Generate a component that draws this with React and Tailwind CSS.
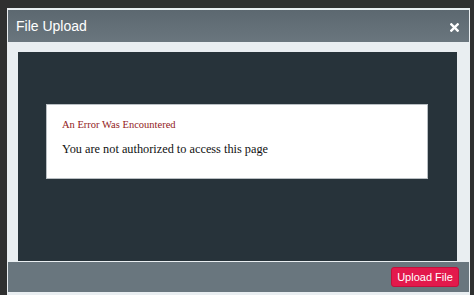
export default function App() {
  return (
    <div className="w-[474px] h-[295px] overflow-hidden bg-[#2f3030] pt-[8px] pl-[7px] pr-[4px]">
      <div className="h-[287px] bg-[#e9eef1] pt-[2px] px-[1px] flex flex-col">
        <div className="h-[32px] shrink-0 bg-gradient-to-b from-[#5c6870] to-[#6a767e] flex items-center justify-between pl-[8px] pr-[10px]">
          <span className="text-white text-[14px] leading-none" style={{ fontFamily: "'Liberation Sans', Arial, sans-serif" }}>File Upload</span>
          <svg width="9" height="9" viewBox="0 0 10 10" className="mt-[3px]">
            <path d="M1.5 1.5 L8.5 8.5 M8.5 1.5 L1.5 8.5" stroke="#ffffff" strokeWidth="2.6" strokeLinecap="square" />
          </svg>
        </div>
        <div className="flex-1 pt-[10px] pl-[10px] pr-[12px] pb-[1px] flex">
          <div className="flex-1 bg-[#27333a] pt-[52px] pl-[28px] pr-[29px]">
            <div className="h-[75px] bg-white border border-[#b9bfc3] pl-[15px] pt-[14px]" style={{ fontFamily: "'Liberation Serif', 'Times New Roman', serif" }}>
              <div className="text-[#921a1a] text-[10.5px] leading-[12px]">An Error Was Encountered</div>
              <div className="text-[#111111] text-[12.3px] leading-[15px] mt-[11px]">You are not authorized to access this page</div>
            </div>
          </div>
        </div>
        <div className="h-[30px] shrink-0 bg-[#69767e] flex items-center justify-end pr-[10px]">
          <button className="h-[20px] w-[68px] rounded-[3px] bg-[#e3194c] text-white text-[11px] leading-none border border-[#c3103c]" style={{ fontFamily: "'Liberation Sans', Arial, sans-serif" }}>Upload File</button>
        </div>
        <div className="h-[3px] shrink-0" />
      </div>
    </div>
  );
}
